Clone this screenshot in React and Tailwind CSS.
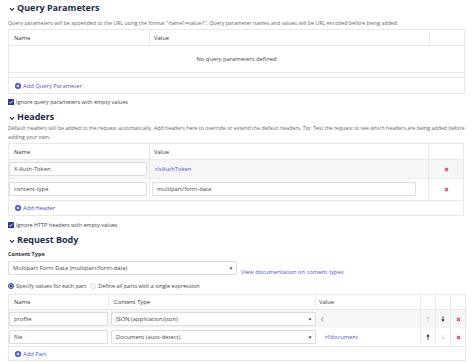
import React from 'react';

const NAVY = '#1d2b4c';

function Chevron() {
  return (
    <svg width="6" height="5" viewBox="0 0 6 5" className="mr-[2px] mt-[2px]">
      <path d="M1 1.2 L3 3.4 L5 1.2" fill="none" stroke={NAVY} strokeWidth="1.1" />
    </svg>
  );
}

function SectionTitle({ children, className = '' }) {
  return (
    <div className={`flex items-center h-[12px] pl-[1px] ${className}`}>
      <Chevron />
      <span className="text-[9px] leading-[12px] font-bold text-[#1d2b4c]">{children}</span>
    </div>
  );
}

function PlusCircle() {
  return (
    <svg width="6" height="6" viewBox="0 0 6 6" className="mr-[2px]">
      <circle cx="3" cy="3" r="3" fill="#3f4db8" />
      <path d="M3 1.4 V4.6 M1.4 3 H4.6" stroke="#fff" strokeWidth="0.9" />
    </svg>
  );
}

function CheckBox() {
  return (
    <svg width="6" height="6" viewBox="0 0 6 6" className="mr-[2px]">
      <rect width="6" height="6" rx="0.6" fill="#27358a" />
      <path d="M1.3 3.1 L2.5 4.3 L4.8 1.6" fill="none" stroke="#fff" strokeWidth="0.9" />
    </svg>
  );
}

function Radio({ on }) {
  return (
    <svg width="6" height="6" viewBox="0 0 6 6" className="mr-[2px]">
      {on ? (
        <>
          <circle cx="3" cy="3" r="2.5" fill="#fff" stroke="#27358a" strokeWidth="1" />
          <circle cx="3" cy="3" r="1.4" fill="#27358a" />
        </>
      ) : (
        <circle cx="3" cy="3" r="2.5" fill="#fff" stroke="#bbb" strokeWidth="0.6" />
      )}
    </svg>
  );
}

function Cross() {
  return (
    <svg width="5" height="5" viewBox="0 0 5 5">
      <path d="M1 1 L4 4 M4 1 L1 4" stroke="#e2405c" strokeWidth="1.2" />
    </svg>
  );
}

function Arrow({ up, active }) {
  const c = active ? NAVY : '#d4d4d4';
  return (
    <svg width="4" height="6" viewBox="0 0 4 6" style={{ transform: up ? 'none' : 'rotate(180deg)' }}>
      <path d="M2 0.3 L3.8 2.6 H0.2 Z" fill={c} />
      <path d="M2 2 V5.8" stroke={c} strokeWidth="0.8" />
    </svg>
  );
}

function Caret() {
  return (
    <svg width="4" height="3" viewBox="0 0 4 3">
      <path d="M0.3 0.5 H3.7 L2 2.6 Z" fill="#333" />
    </svg>
  );
}

function Input({ children, className = '' }) {
  return (
    <div className={`h-[14px] border border-[#dcdcdc] bg-white rounded-[1px] flex items-center px-[4px] text-[#444] ${className}`}>
      {children}
    </div>
  );
}

function Select({ children, className = '' }) {
  return (
    <div className={`h-[14px] border border-[#dcdcdc] bg-white rounded-[1px] flex items-center justify-between pl-[4px] pr-[3px] text-[#444] ${className}`}>
      <span>{children}</span>
      <Caret />
    </div>
  );
}

function AddRow({ label, h = 'h-[16px]' }) {
  return (
    <div className={`${h} flex items-center pl-[6px] border-t border-[#e8e8e8] text-[#4b53c6]`}>
      <PlusCircle />
      {label}
    </div>
  );
}

export default function App() {
  return (
    <div className="w-[474px] h-[364px] overflow-hidden bg-white px-[8px] pt-[2px] font-['Open_Sans',sans-serif] text-[5.8px] leading-[8px] text-[#333]">
      <SectionTitle>Query Parameters</SectionTitle>
      <p className="mt-[5px] text-[5.25px] leading-[8px] text-[#666]">
        Query parameters will be appended to the URL using the format "name1=value1". Query parameter names and values will be URL encoded before being added.
      </p>
      <div className="mt-[2px] border border-[#e8e8e8] w-[457px]">
        <div className="flex h-[16px] border-b border-[#e8e8e8]">
          <div className="w-[141px] pl-[5px] flex items-center border-r border-[#e8e8e8]">Name</div>
          <div className="w-[280px] pl-[4px] flex items-center border-r border-[#e8e8e8]">Value</div>
          <div className="flex-1" />
        </div>
        <div className="h-[27px] flex items-center justify-center border-b border-[#e8e8e8] text-[#444]">
          No query parameters defined
        </div>
        <div className="h-[4px]" />
        <AddRow label="Add Query Parameter" />
      </div>
      <div className="mt-[4px] h-[8px] flex items-center text-[#444] text-[5.5px]">
        <CheckBox />
        Ignore query parameters with empty values
      </div>

      <SectionTitle className="mt-[5px]">Headers</SectionTitle>
      <p className="mt-[1px] text-[5.25px] leading-[9px] text-[#666] w-[458px]">
        Default headers will be added to the request automatically. Add headers here to override or extend the default headers. Tip: Test the request to see which headers are being added before adding your own.
      </p>
      <div className="mt-[1px] border border-[#e8e8e8] w-[456px]">
        <div className="flex h-[16px] border-b border-[#e8e8e8]">
          <div className="w-[141px] pl-[5px] flex items-center border-r border-[#e8e8e8]">Name</div>
          <div className="w-[279px] pl-[4px] flex items-center border-r border-[#e8e8e8]">Value</div>
          <div className="flex-1" />
        </div>
        <div className="flex h-[19px] bg-[#f6f6f6] border-b border-[#eeeeee]">
          <div className="w-[141px] pr-[2px] flex items-center border-r border-[#e8e8e8]">
            <Input className="w-full">X-Auth-Token</Input>
          </div>
          <div className="w-[279px] pl-[5px] flex items-center border-r border-[#e8e8e8] text-[#4b53c6]">rlxAuthToken</div>
          <div className="flex-1 flex items-center justify-center"><Cross /></div>
        </div>
        <div className="flex h-[20px]">
          <div className="w-[141px] pr-[2px] flex items-center border-r border-[#e8e8e8]">
            <Input className="w-full">content-type</Input>
          </div>
          <div className="w-[279px] pl-[2px] pr-[12px] flex items-center border-r border-[#e8e8e8]">
            <Input className="w-full">multipart/form-data</Input>
          </div>
          <div className="flex-1 flex items-center justify-center"><Cross /></div>
        </div>
        <div className="h-[1px]" />
        <AddRow label="Add Header" h="h-[15px]" />
      </div>
      <div className="mt-[5px] h-[8px] flex items-center text-[#444] text-[5.5px]">
        <CheckBox />
        Ignore HTTP headers with empty values
      </div>

      <SectionTitle className="mt-[5px]">Request Body</SectionTitle>
      <div className="mt-[4px] h-[8px] flex items-center font-bold text-[5.5px] text-[#333]">Content Type</div>
      <div className="mt-[3px] flex items-end">
        <Select className="w-[229px]">Multipart Form Data (multipart/form-data)</Select>
        <span className="ml-[4px] text-[#4b53c6] leading-[8px] mb-[-1px]">View documentation on content types</span>
      </div>
      <div className="mt-[7px] h-[8px] flex items-center text-[#444] text-[5.5px]">
        <Radio on />
        <span className="mr-[4px]">Specify values for each part</span>
        <Radio />
        <span>Define all parts with a single expression</span>
      </div>
      <div className="mt-[4px] border border-[#e8e8e8] w-[458px]">
        <div className="flex h-[15px] border-b border-[#e8e8e8]">
          <div className="w-[100px] pl-[5px] flex items-center border-r border-[#e8e8e8]">Name</div>
          <div className="w-[207px] pl-[5px] flex items-center border-r border-[#e8e8e8]">Content Type</div>
          <div className="w-[105px] pl-[3px] flex items-center border-r border-[#e8e8e8]">Value</div>
          <div className="w-[15px] border-r border-[#e8e8e8]" />
          <div className="w-[15px] border-r border-[#e8e8e8]" />
          <div className="flex-1" />
        </div>
        <div className="flex h-[18px] bg-[#f6f6f6]">
          <div className="w-[100px] flex items-center"><Input className="w-[99px]">profile</Input></div>
          <div className="w-[207px] pl-[2px] flex items-center"><Select className="w-[205px]">JSON (application/json)</Select></div>
          <div className="w-[105px] pl-[5px] flex items-center border-r border-[#e8e8e8] text-[#4b53c6]">{'{'}</div>
          <div className="w-[15px] flex items-center justify-center border-r border-[#e8e8e8]"><Arrow up /></div>
          <div className="w-[15px] flex items-center justify-center border-r border-[#e8e8e8]"><Arrow active /></div>
          <div className="flex-1 flex items-center justify-center"><Cross /></div>
        </div>
        <div className="flex h-[18px]">
          <div className="w-[100px] flex items-center"><Input className="w-[99px]">file</Input></div>
          <div className="w-[207px] pl-[2px] flex items-center"><Select className="w-[205px]">Document (auto-detect)</Select></div>
          <div className="w-[105px] pl-[9px] flex items-center border-r border-[#e8e8e8] text-[#4b53c6]">rl!document</div>
          <div className="w-[15px] flex items-center justify-center border-r border-[#e8e8e8]"><Arrow up active /></div>
          <div className="w-[15px] flex items-center justify-center border-r border-[#e8e8e8]"><Arrow /></div>
          <div className="flex-1 flex items-center justify-center"><Cross /></div>
        </div>
        <AddRow label="Add Part" h="h-[14px]" />
      </div>
    </div>
  );
}
